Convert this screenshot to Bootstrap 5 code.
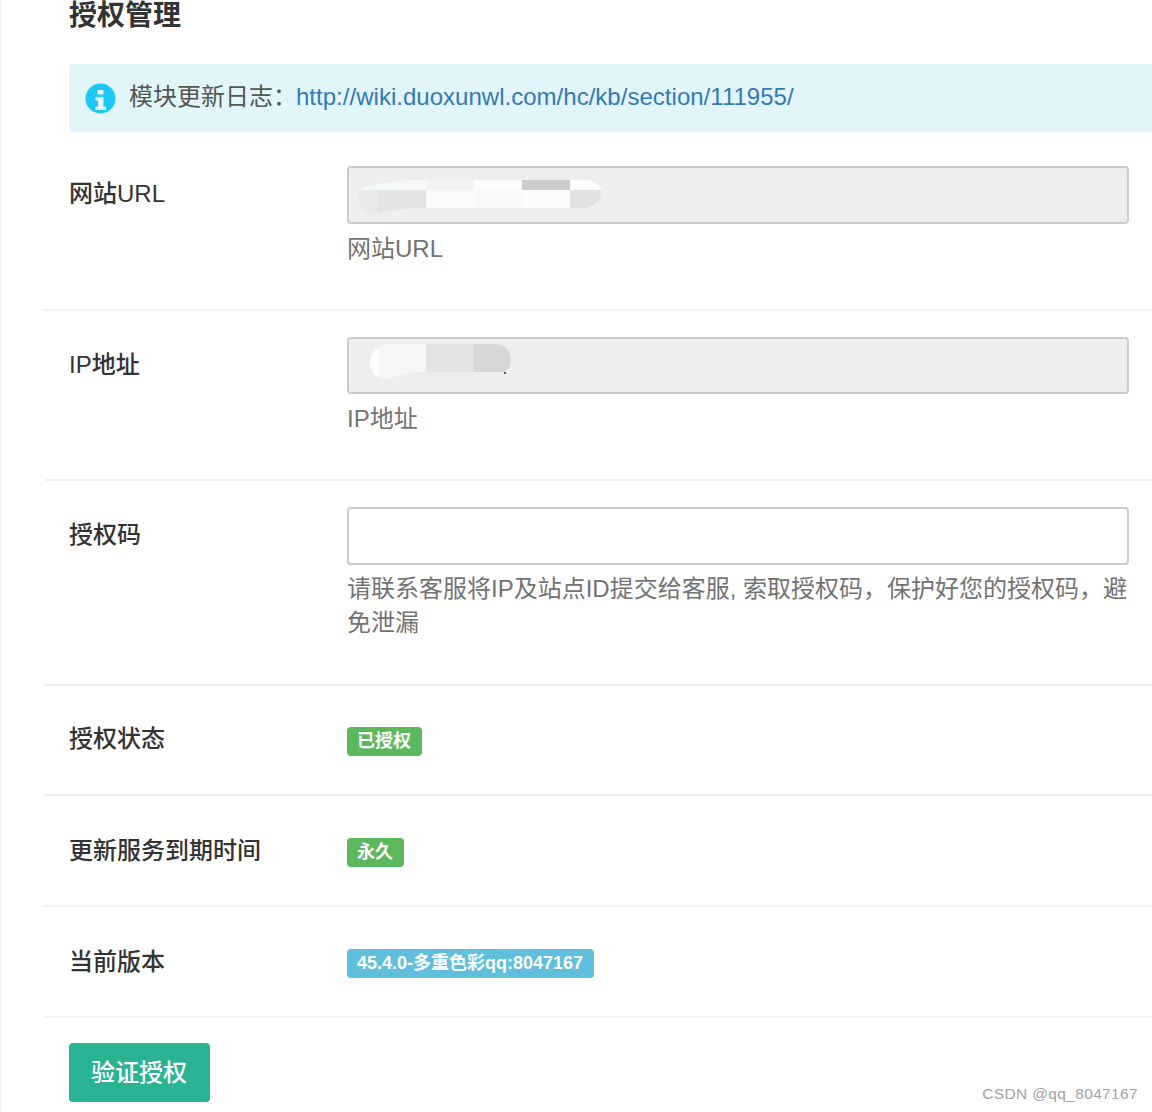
<!DOCTYPE html>
<html lang="zh-CN">
<head>
    <meta charset="UTF-8">
    <meta name="viewport" content="width=device-width, initial-scale=1.0">
    <title>授权管理</title>
    <link href="https://cdn.jsdelivr.net/npm/bootstrap@5.3.2/dist/css/bootstrap.min.css" rel="stylesheet">
    <style>
        html, body {
            height: 1112px;
            overflow: hidden;
        }
        body {
            font-family: "Liberation Sans", "Noto Sans CJK SC", sans-serif;
            font-size: 24px;
            color: #333;
            background: #fff;
        }
        .page-wrap {
            height: 1112px;
            border-left: 2px solid #f3f3f3;
            padding-left: 42px;
            position: relative;
        }
        .page-title {
            font-size: 28px;
            font-weight: 700;
            line-height: 30px;
            margin: 0;
            padding: 1px 0 33px 25px;
            color: #333;
        }
        .log-alert {
            height: 68px;
            margin: 0 0 0 25px;
            padding: 0 0 2px 16px;
            border: 0;
            border-radius: 4px 0 0 4px;
            background: #e1f5fa;
            color: #555;
            line-height: 34px;
        }
        .log-alert a {
            color: #337ab7;
            text-decoration: none;
            margin-left: -1px;
            letter-spacing: .02px;
        }
        .log-alert svg {
            margin: 2px 13px 0 0;
        }
        .set-row {
            border-bottom: 2px solid #f0f3f4;
            padding: 26px 23px 0 25px;
        }
        .set-row.first-row {
            padding-top: 34px;
            height: 179px;
        }
        .row-ip { height: 170px; }
        .row-code { height: 205px; }
        .row-state { height: 110px; padding-top: 41px; }
        .row-date { height: 111px; padding-top: 42px; }
        .set-label {
            width: 278px;
            flex: none;
            font-weight: 500;
            line-height: 34px;
            margin: 0;
            padding: 0;
        }
        .form-line .set-label {
            padding-top: 11px;
        }
        .tag-line .set-label {
            margin-top: -4px;
        }
        .row-state .set-label {
            margin-top: -5px;
        }
        .set-field {
            flex: 1;
            min-width: 0;
            position: relative;
        }
        .set-input {
            height: 58px;
            border: 2px solid #ccc;
            border-radius: 4px;
            background: #fff;
        }
        .row-ip .set-input {
            height: 57px;
        }
        .set-input:disabled {
            background: #eee;
        }
        .set-help {
            color: #737373;
            line-height: 34px;
            margin-top: 8px;
        }
        .row-code .set-help {
            margin-top: 7px;
        }
        .state-tag {
            font-size: 18px;
            font-weight: 700;
            line-height: 29px;
            padding: 0 11px 0 10px;
            border-radius: 4px;
            vertical-align: top;
            color: #fff;
        }
        .tag-green { background: #5cb85c; }
        .tag-blue { background: #5fbfdd; }
        .blur-mask {
            position: absolute;
            left: 0;
            top: 0;
        }
        .submit-btn {
            background: #2ab393;
            border: 0;
            border-radius: 4px;
            color: #fff;
            font-size: 24px;
            font-weight: 500;
            line-height: 34px;
            width: 141px;
            height: 59px;
            padding: 0 1px 0 0;
            margin: 25px 0 0 25px;
        }
        .csdn-mark {
            position: absolute;
            right: 14px;
            top: 1084px;
            font-size: 15.5px;
            letter-spacing: 0.35px;
            line-height: 20px;
            color: #a3a3a3;
        }
    </style>
</head>
<body>
    <div class="page-wrap">
        <h3 class="page-title">授权管理</h3>

        <div class="alert alert-info log-alert d-flex align-items-center">
            <svg width="31" height="31" viewBox="0 0 31 31">
                <circle cx="15.5" cy="15.5" r="15" fill="#1fc8f3"/>
                <path fill="#e1f5fa" d="M12.5 7h6v4.500h-6zM10.500 14h8v9.500h2.500V27H10.500v-3.500h2.500v-6h-2.500z"/>
            </svg>
            <span>模块更新日志：</span><a href="#">http://wiki.duoxunwl.com/hc/kb/section/111955/</a>
        </div>

        <div class="set-row first-row form-line d-flex">
            <label class="set-label">网站URL</label>
            <div class="set-field">
                <input type="text" class="form-control set-input" disabled>
                <svg class="blur-mask" width="260" height="58" viewBox="0 0 260 58">
                    <path fill="#f6f9f9" d="M10 24C30 17 50 14 79 14V24z"/>
                    <path fill="#e9e9e9" d="M10 24H31V47H20C14 47 10 35 10 24z"/>
                    <path fill="#e4e4e4" d="M31 24H79V42C60 42 45 44 31 47z"/>
                    <rect x="79" y="14" width="48" height="10" fill="#f3f3f3"/>
                    <rect x="79" y="24" width="48" height="18" fill="#fbfbfb"/>
                    <rect x="127" y="14" width="48" height="10" fill="#fcfcfc"/>
                    <rect x="127" y="24" width="48" height="18" fill="#f8f8f8"/>
                    <rect x="175" y="14" width="48" height="10" fill="#cdcdcd"/>
                    <rect x="175" y="24" width="48" height="18" fill="#fbfbfb"/>
                    <path fill="#fdfdfd" d="M223 14h16c7 0 14 4 15 10h-31z"/>
                    <path fill="#e2e2e2" d="M223 24h31c1 10-8 18-17 18h-14z"/>
                </svg>
                <div class="set-help">网站URL</div>
            </div>
        </div>

        <div class="set-row row-ip form-line d-flex">
            <label class="set-label">IP地址</label>
            <div class="set-field">
                <input type="text" class="form-control set-input" disabled>
                <svg class="blur-mask" width="170" height="58" viewBox="0 0 170 58">
                    <path fill="#f6f6f6" d="M79 7H45C32 7 23 15 23 25C23 36 30 42 38 42C45 42 50 35 79 35z"/>
                    <path fill="#fdfdfd" d="M32 11C26 14 23 19 23 25C23 32 27 38 32 40z"/>
                    <rect x="79" y="7" width="48" height="28" fill="#e4e4e4"/>
                    <path fill="#d7d7d7" d="M127 7h22c9 0 15 8 15 15c0 7-3 11-7 13h-30z"/>
                    <rect x="157" y="35" width="2" height="2" fill="#555"/>
                </svg>
                <div class="set-help">IP地址</div>
            </div>
        </div>

        <div class="set-row row-code form-line d-flex">
            <label class="set-label">授权码</label>
            <div class="set-field">
                <input type="text" class="form-control set-input">
                <div class="set-help">请联系客服将IP及站点ID提交给客服, 索取授权码，保护好您的授权码，避免泄漏</div>
            </div>
        </div>

        <div class="set-row row-state tag-line d-flex">
            <label class="set-label">授权状态</label>
            <div class="set-field"><span class="badge state-tag tag-green">已授权</span></div>
        </div>

        <div class="set-row row-date tag-line d-flex">
            <label class="set-label">更新服务到期时间</label>
            <div class="set-field"><span class="badge state-tag tag-green">永久</span></div>
        </div>

        <div class="set-row row-date tag-line d-flex">
            <label class="set-label">当前版本</label>
            <div class="set-field"><span class="badge state-tag tag-blue">45.4.0-多重色彩qq:8047167</span></div>
        </div>

        <button type="button" class="btn submit-btn">验证授权</button>

        <div class="csdn-mark">CSDN @qq_8047167</div>
    </div>
    <script src="https://cdn.jsdelivr.net/npm/bootstrap@5.3.2/dist/js/bootstrap.bundle.min.js"></script>
</body>
</html>
